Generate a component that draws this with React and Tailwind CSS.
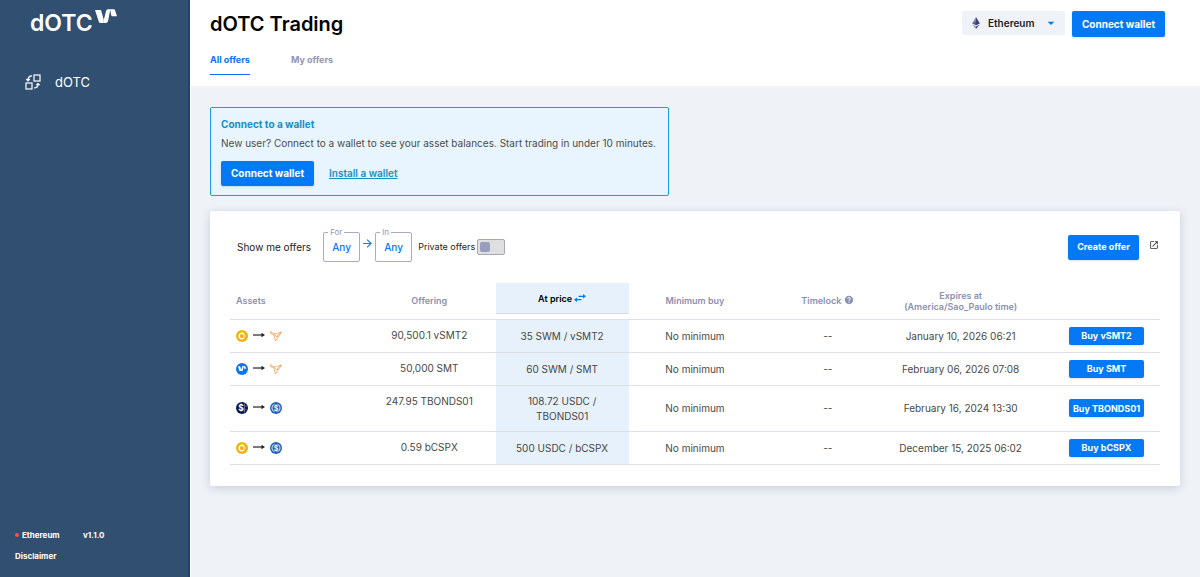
import React, { useState } from 'react';
import { MdArrowDropDown, MdArrowForward, MdHelp, MdOpenInNew } from 'react-icons/md';

const offers = [
  { from: 'gold', to: 'swarm', offering: '90,500.1 vSMT2', price: '35 SWM / vSMT2', expires: 'January 10, 2026 06:21', token: 'vSMT2' },
  { from: 'smt', to: 'swarm', offering: '50,000 SMT', price: '60 SWM / SMT', expires: 'February 06, 2026 07:08', token: 'SMT' },
  { from: 'bond', to: 'usdc', offering: '247.95 TBONDS01', price: '108.72 USDC / TBONDS01', expires: 'February 16, 2024 13:30', token: 'TBONDS01' },
  { from: 'gold', to: 'usdc', offering: '0.59 bCSPX', price: '500 USDC / bCSPX', expires: 'December 15, 2025 06:02', token: 'bCSPX' },
];

function SwarmMark({ className }) {
  return (
    <svg viewBox="0 0 22 14" fill="currentColor" className={className} aria-hidden="true">
      <path d="M0 1h5c.8 0 1.100.400 1.300 1l2.500 9L8 14H5.500c-.9 0-1.400-.4-1.700-1.200z" />
      <path d="M8 14l3-11.800C11.400.800 12 .3 13.300.300h2L13.200 11.500c-.3 1.600-1.100 2.500-2.400 2.500z" />
      <path d="M15 .3h3.600c.8 0 1.200.3 1.400 1L22 7.300h-4.200c-.9 0-1.300-.3-1.600-1.100z" />
    </svg>
  );
}

function SwapIcon() {
  return (
    <svg viewBox="0 0 16 16" fill="none" stroke="currentColor" strokeWidth="1.200" className="size-4" aria-hidden="true">
      <rect x="9" y="1" width="6" height="6" />
      <rect x="1" y="9" width="6" height="6" />
      <path d="M7 1.800C4.500 1.800 3 3.500 3 6.500M1.300 5 3 6.800 4.700 5M9 14c2.500 0 4-1.500 4-4M11.300 11.200 13 9.500l1.700 1.700" />
    </svg>
  );
}

function PriceSwapIcon() {
  return (
    <svg viewBox="0 0 12 8" className="h-2 w-3 text-[#0479f5]" aria-hidden="true">
      <path d="M4.500 2.300H10M2 5.700h5.500" stroke="currentColor" strokeWidth="1.200" />
      <path d="M9 0l3 2.300L9 4.600zM3 3.400.0 5.700 3 8z" fill="currentColor" />
    </svg>
  );
}

function EthIcon() {
  return (
    <svg viewBox="0 0 10 14" className="h-3.5 w-2.5 shrink-0" aria-hidden="true">
      <path d="M5 1 1.200 7.200 5 9.300z" fill="#8487b3" />
      <path d="M5 1l3.800 6.200L5 9.300z" fill="#43467d" />
      <path d="M1.200 8.200 5 10.400V13z" fill="#8487b3" />
      <path d="M8.800 8.200 5 10.400V13z" fill="#43467d" />
      <path d="M1.200 7.200 5 5.600l3.800 1.600L5 9.300z" fill="#34376b" opacity=".6" />
    </svg>
  );
}

function TokenIcon({ name }) {
  if (name === 'swarm') {
    return (
      <svg viewBox="0 0 24 24" fill="none" stroke="#f2a057" strokeWidth="1.600" strokeLinejoin="round" className="size-3" aria-hidden="true">
        <path d="M1 3l6 5 4 14 6-9 6-9-10 3-6 1M7 8l6 5 4 0M13 13l10-9M1 3l1 5h5" />
      </svg>
    );
  }
  if (name === 'gold') {
    return (
      <svg viewBox="0 0 24 24" fill="none" className="size-3" aria-hidden="true">
        <circle cx="12" cy="12" r="12" fill="#f0b40f" />
        <path d="M16.500 9.500A5.500 5.500 0 1 0 16.500 15" stroke="#fff" strokeWidth="2.800" />
        <path d="M12 3.500v4M14 12h5" stroke="#fff" strokeWidth="2" />
      </svg>
    );
  }
  if (name === 'smt') {
    return (
      <span className="flex size-3 items-center justify-center rounded-full bg-[#0a75f0] text-white">
        <SwarmMark className="w-2" />
      </span>
    );
  }
  if (name === 'bond') {
    return (
      <svg viewBox="0 0 24 24" className="size-3" aria-hidden="true">
        <circle cx="12" cy="12" r="12" fill="#0d1740" />
        <text x="10" y="18" textAnchor="middle" fontSize="17" fontWeight="700" fill="#fff">$</text>
        <path d="M17 3v18M20 7v3M20 14v3" stroke="#7f8bb5" strokeWidth="1.500" />
      </svg>
    );
  }
  return (
    <svg viewBox="0 0 24 24" fill="none" className="size-3" aria-hidden="true">
      <circle cx="12" cy="12" r="12" fill="#1f62bd" />
      <path d="M9 4.500a8 8 0 0 0 0 15M15 4.500a8 8 0 0 1 0 15" stroke="#fff" strokeWidth="1.700" />
      <text x="12" y="17" textAnchor="middle" fontSize="14" fontWeight="600" fill="#fff">$</text>
    </svg>
  );
}

function LongArrow() {
  return (
    <svg viewBox="0 0 12 6" className="mb-0.5 h-1.5 w-3" aria-hidden="true">
      <path d="M0 3h10" stroke="#222" strokeWidth="1.200" />
      <path d="M8.500.800 12 3 8.500 5.200z" fill="#222" />
    </svg>
  );
}

function PrimaryButton({ className = '', children }) {
  return (
    <button type="button" className={`rounded-xs bg-[#0479f5] font-bold whitespace-nowrap text-white shadow-sm ${className}`}>
      {children}
    </button>
  );
}

function AssetFilter({ label }) {
  return (
    <div className="flex h-[30px] items-end">
      <fieldset className="h-[34px] w-[37px] rounded-xs border border-[#a9acc6]">
        <legend className="ml-1 px-0.5 text-[8px] leading-2 text-[#9396b5]">{label}</legend>
        <button type="button" className="block w-full pt-[3px] text-center text-[10px] leading-4 font-medium text-[#0479f5]">Any</button>
      </fieldset>
    </div>
  );
}

function Sidebar() {
  return (
    <aside className="flex w-[190px] shrink-0 flex-col border-r-2 border-[#21446f] bg-[#304f71] text-white">
      <a href="#home" className="flex items-start gap-0.5 pt-2 pl-[30px]">
        <span className="text-[23px] leading-[30px] font-semibold">dOTC</span>
        <SwarmMark className="w-[22px] pt-px" />
      </a>
      <nav className="pt-9 pl-[25px]">
        <a href="#dotc" className="flex items-center gap-3.5 text-[13px] leading-4">
          <SwapIcon />
          dOTC
        </a>
      </nav>
      <footer className="mt-auto flex flex-col gap-[9px] pb-[15px] pl-[15px] text-[8px] leading-3 font-bold">
        <div className="flex">
          <span className="flex w-[68px] items-center gap-[3px]">
            <span className="size-1 rounded-full bg-[#f5524c]" />
            Ethereum
          </span>
          <span>v1.1.0</span>
        </div>
        <a href="#disclaimer">Disclaimer</a>
      </footer>
    </aside>
  );
}

function OffersTable() {
  return (
    <table className="w-full table-fixed text-center text-[10px] leading-[15px] text-[#474747]">
      <thead>
        <tr className="h-9 border-b border-[#dfdfea] text-[9px] leading-[11px] text-[#8c8fb1]">
          <th className="pl-1.5 text-left font-semibold">Assets</th>
          <th className="font-semibold">Offering</th>
          <th className="p-0 align-top font-semibold">
            <button type="button" className="flex h-[31px] w-full items-center justify-center gap-0.5 border-b border-[#d3dcee] bg-[#e6f1fc] text-black">
              At price
              <PriceSwapIcon />
            </button>
          </th>
          <th className="font-semibold">Minimum buy</th>
          <th className="font-semibold">
            <span className="flex items-center justify-center gap-[3px]">
              Timelock
              <MdHelp className="mb-0.5 size-2.5" />
            </span>
          </th>
          <th className="font-semibold">Expires at (America/Sao_Paulo time)</th>
          <th aria-label="Actions" />
        </tr>
      </thead>
      <tbody>
        {offers.map((offer) => (
          <tr key={offer.token} className="h-[33px] border-b border-[#dfdfea]">
            <td className="pl-1.5">
              <div className="flex items-center gap-[5px]">
                <TokenIcon name={offer.from} />
                <LongArrow />
                <TokenIcon name={offer.to} />
              </div>
            </td>
            <td className="pt-2 align-top">{offer.offering}</td>
            <td className="bg-[#e6f1fc] px-[18px] pt-2 pb-[7px]">{offer.price}</td>
            <td className="pt-px">No minimum</td>
            <td className="pt-px">--</td>
            <td className="pt-px whitespace-nowrap">{offer.expires}</td>
            <td className="pr-4">
              <div className="flex justify-end">
                <PrimaryButton className="h-[18px] w-[75px] text-[9px]">Buy {offer.token}</PrimaryButton>
              </div>
            </td>
          </tr>
        ))}
      </tbody>
    </table>
  );
}

export default function App() {
  const [privateOnly, setPrivateOnly] = useState(false);

  return (
    <div className="flex min-h-screen bg-[#eff2f7] font-['Inter',sans-serif]">
      <Sidebar />
      <main className="min-w-0 flex-1 border-l border-white">
        <header className="flex h-[86px] items-start justify-between bg-white pt-[11px] pr-[35px] pl-[19px]">
          <div className="pt-px">
            <h1 className="text-[20px] leading-6 font-semibold text-black">dOTC Trading</h1>
            <nav className="mt-[18px] flex gap-[41px] text-[9px] leading-3 font-bold">
              <a href="#all" className="border-b border-[#0a6ff0] pb-2 text-[#0a6ff0]">All offers</a>
              <a href="#mine" className="text-[#9295b3]">My offers</a>
            </nav>
          </div>
          <div className="flex items-start gap-[7px]">
            <label className="flex h-6 w-[103px] items-center rounded-xs bg-[#eff2f9] pr-1.5 pl-[9px] text-[10px]">
              <EthIcon />
              <select aria-label="Network" className="min-w-0 flex-1 appearance-none pl-[7px] font-semibold text-[#1c1c1c]">
                <option>Ethereum</option>
              </select>
              <MdArrowDropDown className="size-4 text-[#0479f5]" />
            </label>
            <PrimaryButton className="h-[26px] w-[93px] text-[10px]">Connect wallet</PrimaryButton>
          </div>
        </header>

        <div className="px-[19px] pt-[21px] pr-5">
          <section className="w-fit rounded-xs border border-[#14a0e8] bg-[#e8f5fe] py-[9px] pr-3 pl-2.5 text-[10px] leading-[15px]">
            <h2 className="font-bold text-[#178fc6]">Connect to a wallet</h2>
            <p className="mt-1 text-[#4c4c4c]">
              New user? Connect to a wallet to see your asset balances. Start trading in under 10 minutes.
            </p>
            <div className="mt-2.5 flex items-center gap-[15px]">
              <PrimaryButton className="h-[25px] w-[93px]">Connect wallet</PrimaryButton>
              <a href="#install" className="font-semibold text-[#178fc6] underline">Install a wallet</a>
            </div>
          </section>

          <section className="mt-[15px] rounded-xs bg-white px-5 pt-[21px] pb-[21px] shadow-[0_2px_10px_rgba(60,75,110,0.22)]">
            <div className="mb-[21px] flex items-center pl-[7px]">
              <span className="mr-3 text-[10px] text-[#222]">Show me offers</span>
              <AssetFilter label="For" />
              <MdArrowForward className="mx-px mb-2 size-[13px] text-[#0479f5]" />
              <AssetFilter label="In" />
              <label className="ml-1.5 flex items-center gap-0.5 text-[9px] text-[#222]">
                Private offers
                <input
                  type="checkbox"
                  checked={privateOnly}
                  onChange={(e) => setPrivateOnly(e.target.checked)}
                  className="flex h-4 w-7 appearance-none items-center rounded-xs border border-[#a8a8b4] bg-[#dfdfdf] px-0.5 before:size-2.5 before:rounded-xs before:bg-[#9b9dbd] checked:justify-end"
                />
              </label>
              <PrimaryButton className="ml-auto h-[25px] w-[71px] text-[9px]">Create offer</PrimaryButton>
              <a href="#open" aria-label="Open in new tab" className="mb-1 ml-2.5 pr-px text-[#333]">
                <MdOpenInNew className="size-2.5" />
              </a>
            </div>
            <OffersTable />
          </section>
        </div>
      </main>
    </div>
  );
}
